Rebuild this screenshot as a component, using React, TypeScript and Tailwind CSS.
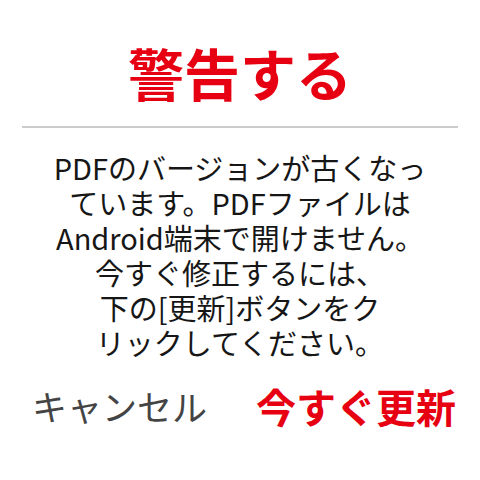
export default function App() {
  const lines = [
    'PDFのバージョンが古くなっ',
    'ています。PDFファイルは',
    'Android端末で開けません。',
    '今すぐ修正するには、',
    '下の[更新]ボタンをク',
    'リックしてください。',
  ]

  return (
    <div
      className="w-[480px] h-[480px] bg-white flex flex-col items-center overflow-hidden"
      style={{ fontFamily: '"Noto Sans CJK JP", "Noto Sans", sans-serif' }}
    >
      {/* Title */}
      <h1 className="mt-[38px] text-[56px] leading-[68px] font-bold text-[#e60012]">警告する</h1>
      <div className="mt-[20px] w-[436px] h-[2px] bg-[#cccccc]" />

      {/* Message */}
      <p className="mt-[22px] text-[29px] leading-[35px] text-[#161616] text-center">
        {lines.map(l => (
          <span key={l} className="block">{l}</span>
        ))}
      </p>

      {/* Actions */}
      <div className="mt-[24px] w-full flex items-center justify-between pl-[32px] pr-[24px]">
        <button className="text-[35px] leading-[44px] text-[#444444]">キャンセル</button>
        <button className="text-[40px] leading-[44px] font-bold text-[#e60012]">今すぐ更新</button>
      </div>
    </div>
  )
}
